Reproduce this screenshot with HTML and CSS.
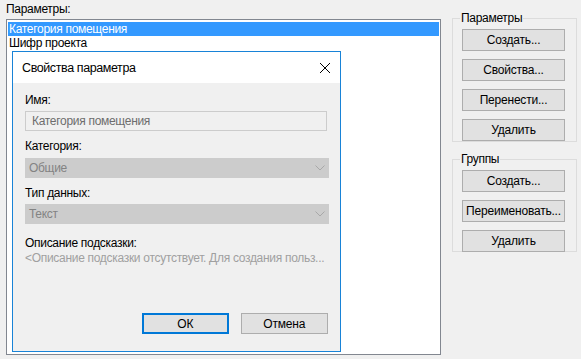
FILE: index.html
```html
<!DOCTYPE html>
<html lang="ru">
<head>
<meta charset="utf-8">
<link rel="stylesheet" href="styles.css">
</head>
<body>
<div class="page">
  <div class="left">
    <div class="caption">Параметры:</div>
    <div class="listbox">
      <div class="item selected">Категория помещения</div>
      <div class="item">Шифр проекта</div>
    </div>
  </div>
  <div class="right">
    <fieldset class="group g1">
      <legend>Параметры</legend>
      <button class="btn">Создать...</button>
      <button class="btn">Свойства...</button>
      <button class="btn">Перенести...</button>
      <button class="btn">Удалить</button>
    </fieldset>
    <fieldset class="group g2">
      <legend>Группы</legend>
      <button class="btn">Создать...</button>
      <button class="btn">Переименовать...</button>
      <button class="btn">Удалить</button>
    </fieldset>
  </div>

  <div class="dialog">
    <div class="titlebar">
      <span class="title">Свойства параметра</span>
      <svg class="close" width="12" height="12" viewBox="0 0 12 12"><path d="M1 1 L11 11 M11 1 L1 11" stroke="#000" stroke-width="1" fill="none"/></svg>
    </div>
    <div class="dbody">
      <div class="lbl l-name">Имя:</div>
      <div class="input">Категория помещения</div>
      <div class="lbl l-cat">Категория:</div>
      <div class="select"><span>Общие</span><svg width="10" height="6" viewBox="0 0 10 6"><path d="M0.5 0.5 L5 5 L9.5 0.5" stroke="#a8a8a8" fill="none"/></svg></div>
      <div class="lbl l-type">Тип данных:</div>
      <div class="select"><span>Текст</span><svg width="10" height="6" viewBox="0 0 10 6"><path d="M0.5 0.5 L5 5 L9.5 0.5" stroke="#a8a8a8" fill="none"/></svg></div>
      <div class="lbl l-desc">Описание подсказки:</div>
      <div class="desc">&lt;Описание подсказки отсутствует. Для создания польз...</div>
      <div class="dbuttons">
        <button class="btn dbtn ok">ОК</button>
        <button class="btn dbtn">Отмена</button>
      </div>
    </div>
  </div>
</div>
</body>
</html>
```

FILE: styles.css
```css
html, body {
  margin: 0;
  padding: 0;
  background: #f0f0f0;
}
body {
  font-family: "Liberation Sans", Arial, sans-serif;
  font-size: 12px;
  letter-spacing: -0.3px;
  color: #000;
  width: 581px;
  height: 359px;
  overflow: hidden;
}
.page {
  position: relative;
  display: flex;
  height: 359px;
}
.left {
  display: flex;
  flex-direction: column;
  padding-left: 6px;
  width: 435px;
}
.caption {
  height: 19px;
  line-height: 16px;
  padding-top: 1px;
  box-sizing: border-box;
}
.listbox {
  width: 435px;
  height: 336px;
  border: 1px solid #828790;
  background: #fff;
  box-sizing: border-box;
  padding: 2px 1px;
}
.item {
  height: 14px;
  line-height: 14px;
  padding-left: 1px;
}
.item.selected {
  background: #3399ff;
  color: #fff;
}
.right {
  display: flex;
  flex-direction: column;
  margin-left: 11px;
  width: 125px;
}
.group {
  margin: 0;
  padding: 4px 0 0 9px;
  border: 1px solid #dcdcdc;
  display: flex;
  flex-direction: column;
  gap: 8px;
}
.group legend {
  padding: 0 1px;
  margin-left: -2px;
  line-height: 13px;
}
.g1 {
  margin-top: 12px;
  height: 130px;
  box-sizing: border-box;
  gap: 8px;
}
.g2 {
  margin-top: 11px;
  height: 99px;
  box-sizing: border-box;
}
.btn {
  font-family: inherit;
  font-size: 12px;
  letter-spacing: -0.2px;
  color: #000;
  width: 103px;
  height: 22px;
  background: #e1e1e1;
  border: 1px solid #adadad;
  padding: 0;
  margin: 0;
  line-height: 18px;
  box-sizing: border-box;
}
.dialog {
  position: absolute;
  left: 12px;
  top: 51px;
  width: 329px;
  height: 301px;
  border: 1px solid #1883d7;
  box-sizing: border-box;
  background: #f0f0f0;
  display: flex;
  flex-direction: column;
}
.titlebar {
  height: 31px;
  background: #fff;
  display: flex;
  align-items: center;
  justify-content: space-between;
  padding: 1px 9px 0 9px;
  box-sizing: border-box;
}
.title {
  font-size: 12.5px;
  letter-spacing: -0.4px;
}
.dbody {
  display: flex;
  flex-direction: column;
  padding: 10px 12px 0 12px;
}
.lbl {
  line-height: 15px;
  height: 15px;
}
.l-name { margin-bottom: 3px; }
.l-cat { margin-top: 8px; margin-bottom: 4px; }
.l-type { margin-top: 8px; margin-bottom: 3px; }
.l-desc { margin-top: 12px; }
.input {
  height: 20px;
  border: 1px solid #cccccc;
  background: #f0f0f0;
  color: #6d6d6d;
  padding-left: 6px;
  line-height: 18px;
  box-sizing: border-box;
  width: 302px;
}
.select {
  height: 20px;
  width: 304px;
  background: #cccccc;
  color: #838383;
  display: flex;
  align-items: center;
  justify-content: space-between;
  padding: 0 4px 0 4px;
  box-sizing: border-box;
}
.desc {
  color: #a0a0a0;
  line-height: 15px;
  height: 15px;
  white-space: nowrap;
}
.dbuttons {
  display: flex;
  gap: 12px;
  margin-top: 47px;
  padding-left: 117px;
}
.dbtn {
  width: 88px;
  height: 21px;
}
.ok {
  border: 2px solid #0078d7;
  width: 87px;
}
```
